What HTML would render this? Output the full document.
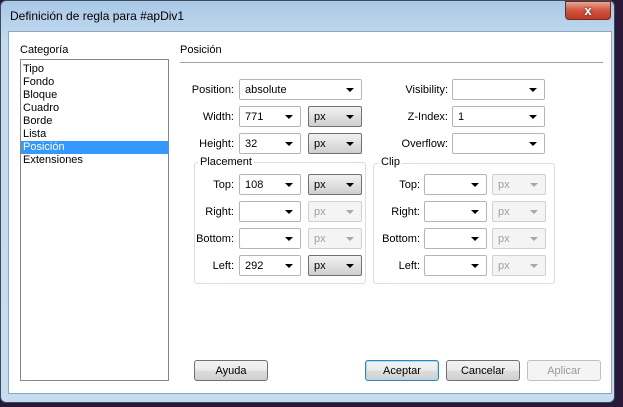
<!DOCTYPE html>
<html><head><style>
*{box-sizing:border-box;margin:0;padding:0}
body{width:623px;height:407px;overflow:hidden;background:#2a1838;font-family:"Liberation Sans",sans-serif;font-size:11px;color:#000;position:relative}
.a{position:absolute}
.win{left:0;top:0;width:615px;height:403px;background:linear-gradient(#a9c8e6,#c4dbf0 40px,#c6dcf1);border:1px solid #3a4a5a;border-radius:6px 6px 6px 6px}
.inner{left:8px;top:31px;width:604px;height:363px;background:#fff;border:1px solid #8fa6bf}
.sel{position:absolute;height:21px;background:#fff;border:1px solid #b5b5b5;border-radius:2px;padding:4px 0 0 5px;font-size:11px}
.sel:after{content:"";position:absolute;right:7px;top:8px;border-left:4px solid transparent;border-right:4px solid transparent;border-top:4px solid #000}
.u{background:linear-gradient(#f2f2f2,#e0e0e0 50%,#cfcfcf);border-color:#707070}
.d{background:#f4f4f4;border-color:#d0d0d0;color:#a0a0a0}
.d:after{border-top-color:#a8a8a8}
.lb{position:absolute;text-align:right;width:80px;font-size:11px}
.fs{position:absolute;border:1px solid #d5dfe5;border-radius:3px}
.lg{position:absolute;background:#fff;padding:0 2px;font-size:11px}
.btn{position:absolute;height:21px;width:74px;border:1px solid #707070;border-radius:3px;background:linear-gradient(#f2f2f2,#ebebeb 50%,#dddddd 51%,#cfcfcf);text-align:center;padding-top:4px;font-size:11px}
</style></head><body>
<div class="a win"></div>
<div class="a" style="left:10px;top:9px;font-size:12px;color:#000">Definición de regla para #apDiv1</div>
<div class="a" style="left:565px;top:1px;width:46px;height:19px;border:1px solid #6b2a22;border-radius:0 0 4px 4px;background:linear-gradient(#e8a593,#d0533d 50%,#c23a22);color:#fff;font-weight:bold;font-size:13px;text-align:center;line-height:17px;text-shadow:0 0 2px #333">x</div>
<div class="a inner"></div>
<div class="a" style="left:20px;top:44px">Categoría</div>
<div class="a" style="left:20px;top:59px;width:149px;height:322px;border:1px solid #828790;line-height:13px;padding-top:3px">
<div style="padding-left:2px">Tipo</div><div style="padding-left:2px">Fondo</div><div style="padding-left:2px">Bloque</div><div style="padding-left:2px">Cuadro</div><div style="padding-left:2px">Borde</div><div style="padding-left:2px">Lista</div><div style="padding-left:2px;background:#3399ff;color:#fff">Posición</div><div style="padding-left:2px">Extensiones</div></div>
<div class="a" style="left:180px;top:44px">Posición</div>
<div class="a" style="left:180px;top:62px;width:423px;height:1px;background:#a0a0a0"></div>

<div class="lb" style="left:154px;top:84px">Position:</div>
<div class="sel" style="left:239px;top:79px;width:123px">absolute</div>
<div class="lb" style="left:154px;top:111px">Width:</div>
<div class="sel" style="left:239px;top:106px;width:62px">771</div>
<div class="sel u" style="left:308px;top:106px;width:54px">px</div>
<div class="lb" style="left:154px;top:138px">Height:</div>
<div class="sel" style="left:239px;top:133px;width:62px">32</div>
<div class="sel u" style="left:308px;top:133px;width:54px">px</div>

<div class="fs" style="left:194px;top:162px;width:172px;height:122px"></div>
<div class="lg" style="left:198px;top:156px">Placement</div>
<div class="lb" style="left:154px;top:179px">Top:</div>
<div class="sel" style="left:239px;top:174px;width:62px">108</div>
<div class="sel u" style="left:308px;top:174px;width:54px">px</div>
<div class="lb" style="left:154px;top:206px">Right:</div>
<div class="sel" style="left:239px;top:201px;width:62px"></div>
<div class="sel d" style="left:308px;top:201px;width:54px">px</div>
<div class="lb" style="left:154px;top:233px">Bottom:</div>
<div class="sel" style="left:239px;top:228px;width:62px"></div>
<div class="sel d" style="left:308px;top:228px;width:54px">px</div>
<div class="lb" style="left:154px;top:260px">Left:</div>
<div class="sel" style="left:239px;top:255px;width:62px">292</div>
<div class="sel u" style="left:308px;top:255px;width:54px">px</div>

<div class="lb" style="left:368px;top:84px">Visibility:</div>
<div class="sel" style="left:452px;top:79px;width:93px"></div>
<div class="lb" style="left:368px;top:111px">Z-Index:</div>
<div class="sel" style="left:452px;top:106px;width:93px">1</div>
<div class="lb" style="left:368px;top:138px">Overflow:</div>
<div class="sel" style="left:452px;top:133px;width:93px"></div>

<div class="fs" style="left:373px;top:163px;width:182px;height:121px"></div>
<div class="lg" style="left:379px;top:156px">Clip</div>
<div class="lb" style="left:340px;top:179px">Top:</div>
<div class="sel" style="left:424px;top:174px;width:63px"></div>
<div class="sel d" style="left:492px;top:174px;width:54px">px</div>
<div class="lb" style="left:340px;top:206px">Right:</div>
<div class="sel" style="left:424px;top:201px;width:63px"></div>
<div class="sel d" style="left:492px;top:201px;width:54px">px</div>
<div class="lb" style="left:340px;top:233px">Bottom:</div>
<div class="sel" style="left:424px;top:228px;width:63px"></div>
<div class="sel d" style="left:492px;top:228px;width:54px">px</div>
<div class="lb" style="left:340px;top:260px">Left:</div>
<div class="sel" style="left:424px;top:255px;width:63px"></div>
<div class="sel d" style="left:492px;top:255px;width:54px">px</div>

<div class="btn" style="left:194px;top:360px">Ayuda</div>
<div class="btn" style="left:365px;top:360px;border-color:#3c7fb1;box-shadow:inset 0 0 0 1px #a8dcf5">Aceptar</div>
<div class="btn" style="left:446px;top:360px">Cancelar</div>
<div class="btn" style="left:527px;top:360px;background:#f4f4f4;border-color:#c0c0c0;color:#9a9a9a">Aplicar</div>
</body></html>
